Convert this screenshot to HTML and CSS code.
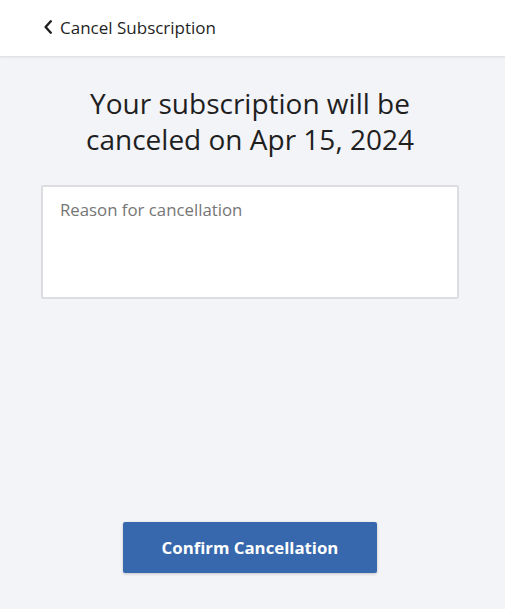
FILE: index.html
```html
<!DOCTYPE html>
<html lang="en">
<head>
<meta charset="utf-8">
<title>Cancel Subscription</title>
<link rel="stylesheet" href="styles.css">
</head>
<body>
<header class="topbar">
  <button class="back" type="button">
    <svg class="chev" width="10" height="14" viewBox="0 0 10 14" aria-hidden="true"><path d="M7.8 1.3 L2.6 7 L7.8 12.7" fill="none" stroke="#1f1f1f" stroke-width="2.4" stroke-linecap="round" stroke-linejoin="round"/></svg>
    <span>Cancel Subscription</span>
  </button>
</header>
<main class="content">
  <h1 class="title">Your subscription will be<br>canceled on Apr 15, 2024</h1>
  <textarea class="reason" placeholder="Reason for cancellation"></textarea>
  <div class="spacer"></div>
  <button class="confirm" type="button">Confirm Cancellation</button>
</main>
</body>
</html>
```
FILE: styles.css
```css
* { box-sizing: border-box; }
html, body { margin: 0; height: 100%; }
body {
  background: #f3f4f8;
  font-family: "Open Sans", "Noto Sans", sans-serif;
  color: #1f1f1f;
  display: flex;
  flex-direction: column;
}
.topbar {
  height: 57px;
  background: #ffffff;
  border-bottom: 1px solid #e2e3e7;
  box-shadow: 0 1px 2px rgba(0,0,0,0.06);
  display: flex;
  align-items: center;
  padding-left: 43px;
}
.back {
  display: flex;
  align-items: center;
  gap: 7px;
  background: none;
  border: 0;
  padding: 0;
  font: inherit;
  font-size: 17px;
  color: #1f1f1f;
  margin-top: -2px;
}
.content {
  flex: 1;
  display: flex;
  flex-direction: column;
  align-items: center;
  padding: 28px 46px 36px 41px;
}
.title {
  margin: 0;
  font-weight: 400;
  font-size: 28px;
  line-height: 36px;
  text-align: center;
  color: #1f1f1f;
}
.reason {
  margin-top: 28px;
  width: 100%;
  height: 114px;
  border: 2px solid #dcdde0;
  border-radius: 2px;
  background: #fff;
  padding: 11px 17px;
  font: inherit;
  font-size: 16.8px;
  resize: none;
  outline: none;
}
.reason::placeholder { color: #767676; }
.spacer { flex: 1; }
.confirm {
  width: 254px;
  height: 51px;
  background: #3768ad;
  color: #fff;
  border: 0;
  border-radius: 2px;
  box-shadow: 0 1px 3px rgba(0,0,0,0.2);
  font: inherit;
  font-weight: 700;
  font-size: 16.8px;
}
```
